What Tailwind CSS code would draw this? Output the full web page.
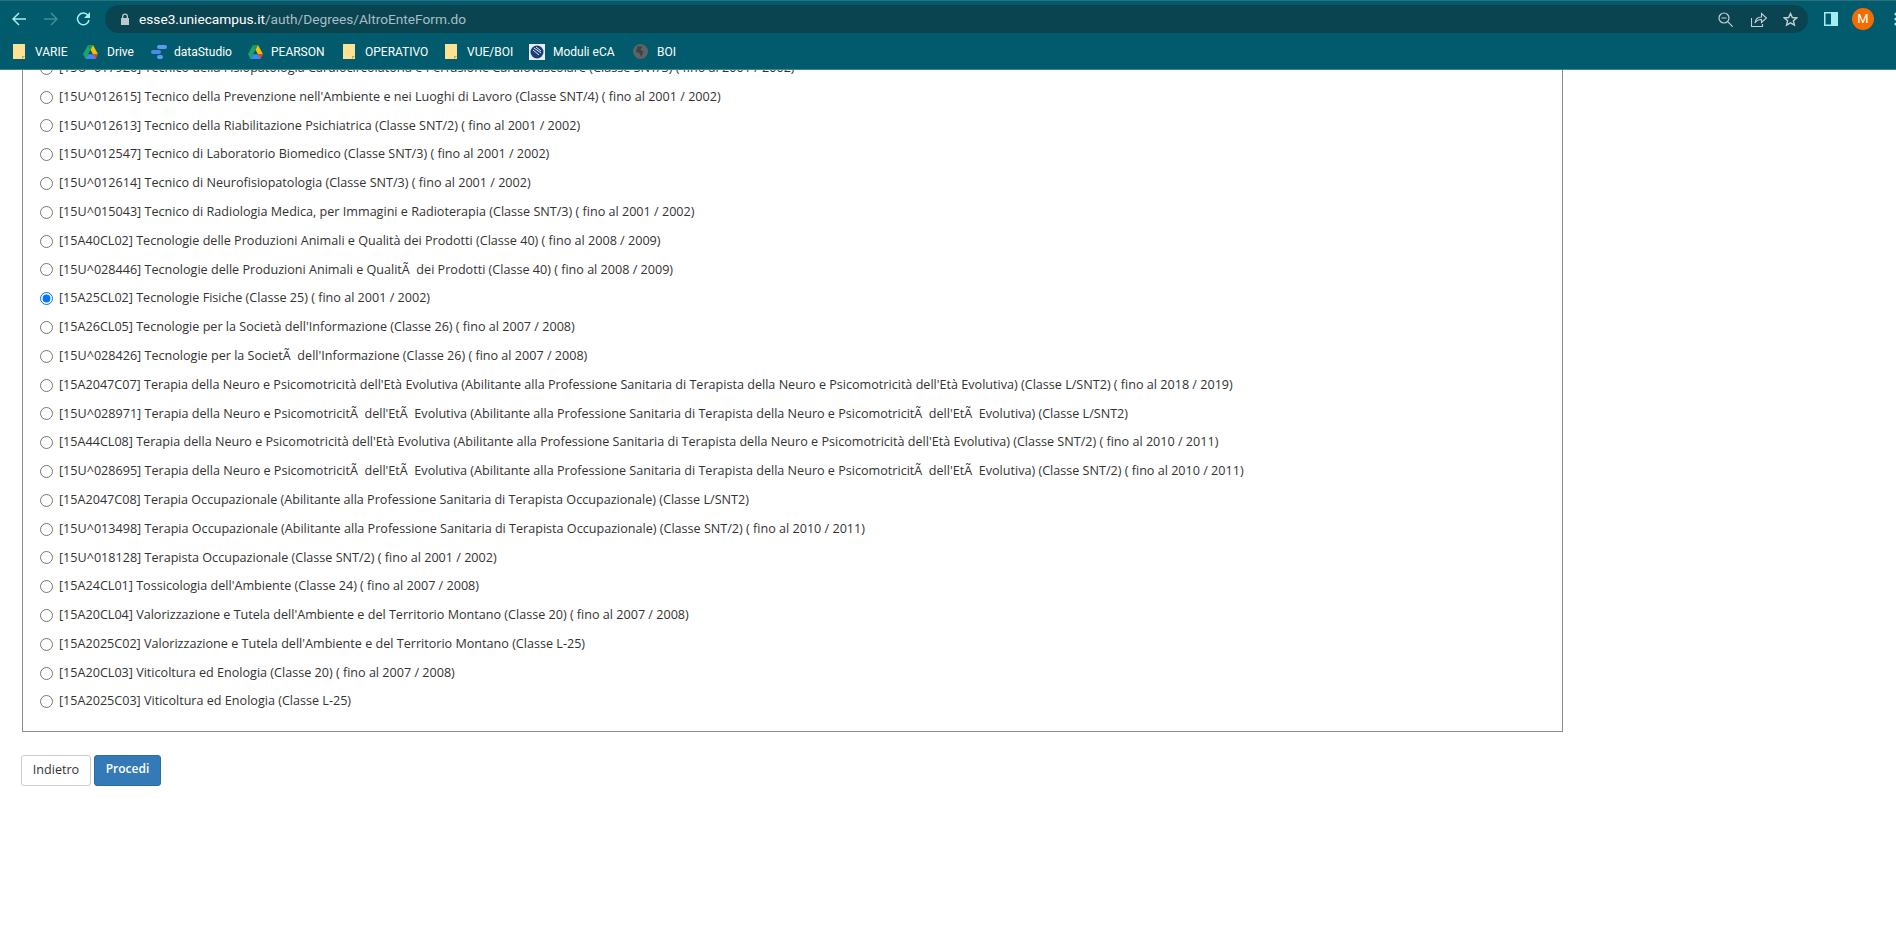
<!DOCTYPE html>
<html lang="it">
<head>
<meta charset="utf-8"/>
<title>AltroEnteForm</title>
<script src="https://cdn.jsdelivr.net/npm/@tailwindcss/browser@4"></script>
</head>
<body class="h-screen overflow-hidden flex flex-col bg-white font-['Open_Sans',sans-serif] text-[#333333]">
  <!-- barra del browser -->
  <header class="h-[70px] shrink-0 bg-[#025b6c] border-t-[1px] border-t-[#2f6f7d] border-b-[1px] border-b-[#3f8490] text-white font-['Roboto',sans-serif] overflow-hidden">
    <div class="h-[36px] flex items-center">
      <div class="w-[105px] flex items-center gap-[18px] pl-[12px] shrink-0">
        <svg class="w-[14px] h-[14px] text-[#a5eef0]" viewBox="0 0 14 14" fill="none" stroke="currentColor" stroke-width="1.5"><path d="M14 7H1.500M7 1L1 7l6 6"/></svg>
        <svg class="w-[14px] h-[14px] text-[#3f8f98]" viewBox="0 0 14 14" fill="none" stroke="currentColor" stroke-width="1.5"><path d="M0 7h12.500M7 1l6 6-6 6"/></svg>
        <svg class="w-[14px] h-[14px] text-[#a5eef0]" viewBox="0 0 14 14" fill="none" stroke="currentColor" stroke-width="1.5"><path d="M12 3.500A5.800 5.800 0 1 0 13 8"/><path d="M14 0v6H8z" fill="currentColor" stroke="none"/></svg>
      </div>
      <div class="w-[1703px] h-[28px] rounded-full bg-[#0b4451] flex items-center shrink-0">
        <svg class="w-[12px] h-[12px] ml-[14px] text-[#b9c9cd]" viewBox="0 0 12 12" fill="currentColor"><path d="M2 5h1V3.500a3 3 0 0 1 6 0V5h1v7H2zM4.300 5h3.400V3.500a1.700 1.700 0 0 0-3.400 0z"/></svg>
        <span class="ml-[8px] text-[13.700px] text-white">esse3.uniecampus.it<span class="text-[#a7bfc4]">/auth/Degrees/AltroEnteForm.do</span></span>
        <div class="ml-auto mr-[10px] flex items-center text-[#c3d0d3]">
          <svg class="w-[15px] h-[15px]" viewBox="0 0 15 15" fill="none" stroke="currentColor" stroke-width="1.200"><circle cx="6" cy="6" r="5"/><path d="M3.500 6h5M9.700 9.700l5 5"/></svg>
          <svg class="ml-[18px] w-[16px] h-[15px]" viewBox="0 0 16 15" fill="none" stroke="currentColor" stroke-width="1.100"><path d="M.500 6v8.500h11V12"/><path d="M4 11c.5-4 3-6 6.500-6V1.500L15.500 6l-5 4.500V7.500C8 7.500 5.500 8.500 4 11z"/></svg>
          <svg class="ml-[16px] w-[15px] h-[15px]" viewBox="0 0 15 15" fill="none" stroke="currentColor" stroke-width="1.400"><path d="M7.500 1.500l1.800 4 4.400.4-3.300 2.900 1 4.300-3.900-2.300-3.900 2.300 1-4.300L1.300 5.900l4.400-.4z"/></svg>
        </div>
      </div>
      <svg class="ml-[16px] w-[14px] h-[14px] shrink-0" viewBox="0 0 14 14"><rect width="14" height="14" fill="#a5eef0"/><rect x="1.500" y="1.500" width="5.500" height="11" fill="#025b6c"/></svg>
      <div class="ml-[14px] w-[22px] h-[22px] rounded-full bg-[#f26c00] flex items-center justify-center text-[13px] shrink-0">M</div>
      <svg class="ml-[20px] w-[4px] h-[14px] shrink-0" viewBox="0 0 4 14" fill="#a5eef0"><circle cx="2" cy="2" r="1.600"/><circle cx="2" cy="7" r="1.600"/><circle cx="2" cy="12" r="1.600"/></svg>
    </div>
    <nav class="h-[29px] flex items-center pl-[13px] text-[12px] text-white">
      <a class="w-[70px] flex items-center gap-[10px]"><svg class="w-[12px] h-[15px]" viewBox="0 0 12 15"><path d="M0 0h12v15H0z" fill="#fde293"/><path d="M9 15v-3h3z" fill="#c9a94e"/></svg>VARIE</a>
      <a class="w-[68px] flex items-center gap-[9px]"><svg class="w-[15px] h-[14px]" viewBox="0 0 16 15"><path d="M5.300 0h5.400l-2.700 5z" fill="#0f9d58"/><path d="M5.300 0L0 10l2.600 5L8 5z" fill="#1fa463"/><path d="M10.700 0L16 10h-5.300L8 5z" fill="#fbbc04"/><path d="M16 10l-2.600 5H10l.7-5z" fill="#ea4335"/><path d="M2.600 15H13.400L10.700 10H5.300z" fill="#4285f4"/></svg>Drive</a>
      <a class="w-[97px] flex items-center gap-[7px]"><svg class="w-[16px] h-[14px]" viewBox="0 0 16 14" fill="#5a9bf0"><rect x="6" y="0" width="10" height="4" rx="2"/><rect x="0" y="5" width="10" height="4" rx="2" fill="#4a8ae8"/><rect x="6" y="10" width="6" height="4" rx="2"/></svg>dataStudio</a>
      <a class="w-[95px] flex items-center gap-[8px]"><svg class="w-[15px] h-[14px]" viewBox="0 0 16 15"><path d="M5.300 0h5.400l-2.700 5z" fill="#0f9d58"/><path d="M5.300 0L0 10l2.600 5L8 5z" fill="#1fa463"/><path d="M10.700 0L16 10h-5.300L8 5z" fill="#fbbc04"/><path d="M16 10l-2.600 5H10l.7-5z" fill="#ea4335"/><path d="M2.600 15H13.400L10.700 10H5.300z" fill="#4285f4"/></svg>PEARSON</a>
      <a class="w-[102px] flex items-center gap-[10px]"><svg class="w-[12px] h-[15px]" viewBox="0 0 12 15"><path d="M0 0h12v15H0z" fill="#fde293"/><path d="M9 15v-3h3z" fill="#c9a94e"/></svg>OPERATIVO</a>
      <a class="w-[84px] flex items-center gap-[10px]"><svg class="w-[12px] h-[15px]" viewBox="0 0 12 15"><path d="M0 0h12v15H0z" fill="#fde293"/><path d="M9 15v-3h3z" fill="#c9a94e"/></svg>VUE/BOI</a>
      <a class="w-[104px] flex items-center gap-[8px]"><svg class="w-[16px] h-[16px]" viewBox="0 0 16 16"><rect width="16" height="16" fill="#e8edf5"/><circle cx="8" cy="8" r="6.500" fill="#1c3f78"/><path d="M4 6l6 5M5 4l7 5M7 3l5 4" stroke="#e8edf5" stroke-width="1"/></svg>Moduli eCA</a>
      <a class="flex items-center gap-[9px]"><svg class="w-[15px] h-[15px]" viewBox="0 0 16 16"><circle cx="8" cy="8" r="8" fill="#5f6368"/><path d="M5 2l5 1-2 3 3 2-2 6-2-4-4-2z" fill="#3d4548"/></svg>BOI</a>
    </nav>
  </header>

  <main class="flex-1 overflow-hidden">
    <div class="mt-[-23px] ml-[22px] w-[1541px] border border-[#8c8c8c] pt-[6px] pb-[15px] pl-[17px] text-[12.600px]">
      <label class="flex items-center h-[28.800px] gap-[6px]"><input type="radio" name="cds" class="w-[13px] h-[13px]"/>[15U^017926] Tecnico della Fisiopatologia Cardiocircolatoria e Perfusione Cardiovascolare (Classe SNT/3) ( fino al 2001 / 2002)</label>
      <label class="flex items-center h-[28.800px] gap-[6px]"><input type="radio" name="cds" class="w-[13px] h-[13px]"/>[15U^012615] Tecnico della Prevenzione nell'Ambiente e nei Luoghi di Lavoro (Classe SNT/4) ( fino al 2001 / 2002)</label>
      <label class="flex items-center h-[28.800px] gap-[6px]"><input type="radio" name="cds" class="w-[13px] h-[13px]"/>[15U^012613] Tecnico della Riabilitazione Psichiatrica (Classe SNT/2) ( fino al 2001 / 2002)</label>
      <label class="flex items-center h-[28.800px] gap-[6px]"><input type="radio" name="cds" class="w-[13px] h-[13px]"/>[15U^012547] Tecnico di Laboratorio Biomedico (Classe SNT/3) ( fino al 2001 / 2002)</label>
      <label class="flex items-center h-[28.800px] gap-[6px]"><input type="radio" name="cds" class="w-[13px] h-[13px]"/>[15U^012614] Tecnico di Neurofisiopatologia (Classe SNT/3) ( fino al 2001 / 2002)</label>
      <label class="flex items-center h-[28.800px] gap-[6px]"><input type="radio" name="cds" class="w-[13px] h-[13px]"/>[15U^015043] Tecnico di Radiologia Medica, per Immagini e Radioterapia (Classe SNT/3) ( fino al 2001 / 2002)</label>
      <label class="flex items-center h-[28.800px] gap-[6px]"><input type="radio" name="cds" class="w-[13px] h-[13px]"/>[15A40CL02] Tecnologie delle Produzioni Animali e Qualità dei Prodotti (Classe 40) ( fino al 2008 / 2009)</label>
      <label class="flex items-center h-[28.800px] gap-[6px]"><input type="radio" name="cds" class="w-[13px] h-[13px]"/><span class="whitespace-pre">[15U^028446] Tecnologie delle Produzioni Animali e QualitÃ  dei Prodotti (Classe 40) ( fino al 2008 / 2009)</span></label>
      <label class="flex items-center h-[28.800px] gap-[6px]"><input type="radio" name="cds" checked class="w-[13px] h-[13px]"/>[15A25CL02] Tecnologie Fisiche (Classe 25) ( fino al 2001 / 2002)</label>
      <label class="flex items-center h-[28.800px] gap-[6px]"><input type="radio" name="cds" class="w-[13px] h-[13px]"/>[15A26CL05] Tecnologie per la Società dell'Informazione (Classe 26) ( fino al 2007 / 2008)</label>
      <label class="flex items-center h-[28.800px] gap-[6px]"><input type="radio" name="cds" class="w-[13px] h-[13px]"/><span class="whitespace-pre">[15U^028426] Tecnologie per la SocietÃ  dell'Informazione (Classe 26) ( fino al 2007 / 2008)</span></label>
      <label class="flex items-center h-[28.800px] gap-[6px]"><input type="radio" name="cds" class="w-[13px] h-[13px]"/>[15A2047C07] Terapia della Neuro e Psicomotricità dell'Età Evolutiva (Abilitante alla Professione Sanitaria di Terapista della Neuro e Psicomotricità dell'Età Evolutiva) (Classe L/SNT2) ( fino al 2018 / 2019)</label>
      <label class="flex items-center h-[28.800px] gap-[6px]"><input type="radio" name="cds" class="w-[13px] h-[13px]"/><span class="whitespace-pre">[15U^028971] Terapia della Neuro e PsicomotricitÃ  dell'EtÃ  Evolutiva (Abilitante alla Professione Sanitaria di Terapista della Neuro e PsicomotricitÃ  dell'EtÃ  Evolutiva) (Classe L/SNT2)</span></label>
      <label class="flex items-center h-[28.800px] gap-[6px]"><input type="radio" name="cds" class="w-[13px] h-[13px]"/>[15A44CL08] Terapia della Neuro e Psicomotricità dell'Età Evolutiva (Abilitante alla Professione Sanitaria di Terapista della Neuro e Psicomotricità dell'Età Evolutiva) (Classe SNT/2) ( fino al 2010 / 2011)</label>
      <label class="flex items-center h-[28.800px] gap-[6px]"><input type="radio" name="cds" class="w-[13px] h-[13px]"/><span class="whitespace-pre">[15U^028695] Terapia della Neuro e PsicomotricitÃ  dell'EtÃ  Evolutiva (Abilitante alla Professione Sanitaria di Terapista della Neuro e PsicomotricitÃ  dell'EtÃ  Evolutiva) (Classe SNT/2) ( fino al 2010 / 2011)</span></label>
      <label class="flex items-center h-[28.800px] gap-[6px]"><input type="radio" name="cds" class="w-[13px] h-[13px]"/>[15A2047C08] Terapia Occupazionale (Abilitante alla Professione Sanitaria di Terapista Occupazionale) (Classe L/SNT2)</label>
      <label class="flex items-center h-[28.800px] gap-[6px]"><input type="radio" name="cds" class="w-[13px] h-[13px]"/>[15U^013498] Terapia Occupazionale (Abilitante alla Professione Sanitaria di Terapista Occupazionale) (Classe SNT/2) ( fino al 2010 / 2011)</label>
      <label class="flex items-center h-[28.800px] gap-[6px]"><input type="radio" name="cds" class="w-[13px] h-[13px]"/>[15U^018128] Terapista Occupazionale (Classe SNT/2) ( fino al 2001 / 2002)</label>
      <label class="flex items-center h-[28.800px] gap-[6px]"><input type="radio" name="cds" class="w-[13px] h-[13px]"/>[15A24CL01] Tossicologia dell'Ambiente (Classe 24) ( fino al 2007 / 2008)</label>
      <label class="flex items-center h-[28.800px] gap-[6px]"><input type="radio" name="cds" class="w-[13px] h-[13px]"/>[15A20CL04] Valorizzazione e Tutela dell'Ambiente e del Territorio Montano (Classe 20) ( fino al 2007 / 2008)</label>
      <label class="flex items-center h-[28.800px] gap-[6px]"><input type="radio" name="cds" class="w-[13px] h-[13px]"/>[15A2025C02] Valorizzazione e Tutela dell'Ambiente e del Territorio Montano (Classe L-25)</label>
      <label class="flex items-center h-[28.800px] gap-[6px]"><input type="radio" name="cds" class="w-[13px] h-[13px]"/>[15A20CL03] Viticoltura ed Enologia (Classe 20) ( fino al 2007 / 2008)</label>
      <label class="flex items-center h-[28.800px] gap-[6px]"><input type="radio" name="cds" class="w-[13px] h-[13px]"/>[15A2025C03] Viticoltura ed Enologia (Classe L-25)</label>
    </div>
    <div class="mt-[23px] ml-[21px] flex gap-[3px] text-[12.600px]">
      <button class="h-[31px] w-[70px] rounded-[3px] border border-[#cccccc] bg-white">Indietro</button>
      <button class="h-[31px] w-[67px] rounded-[3px] border border-[#2e6da4] bg-[#337ab7] text-white text-[12px] font-semibold pb-[3px]">Procedi</button>
    </div>
  </main>
</body>
</html>
